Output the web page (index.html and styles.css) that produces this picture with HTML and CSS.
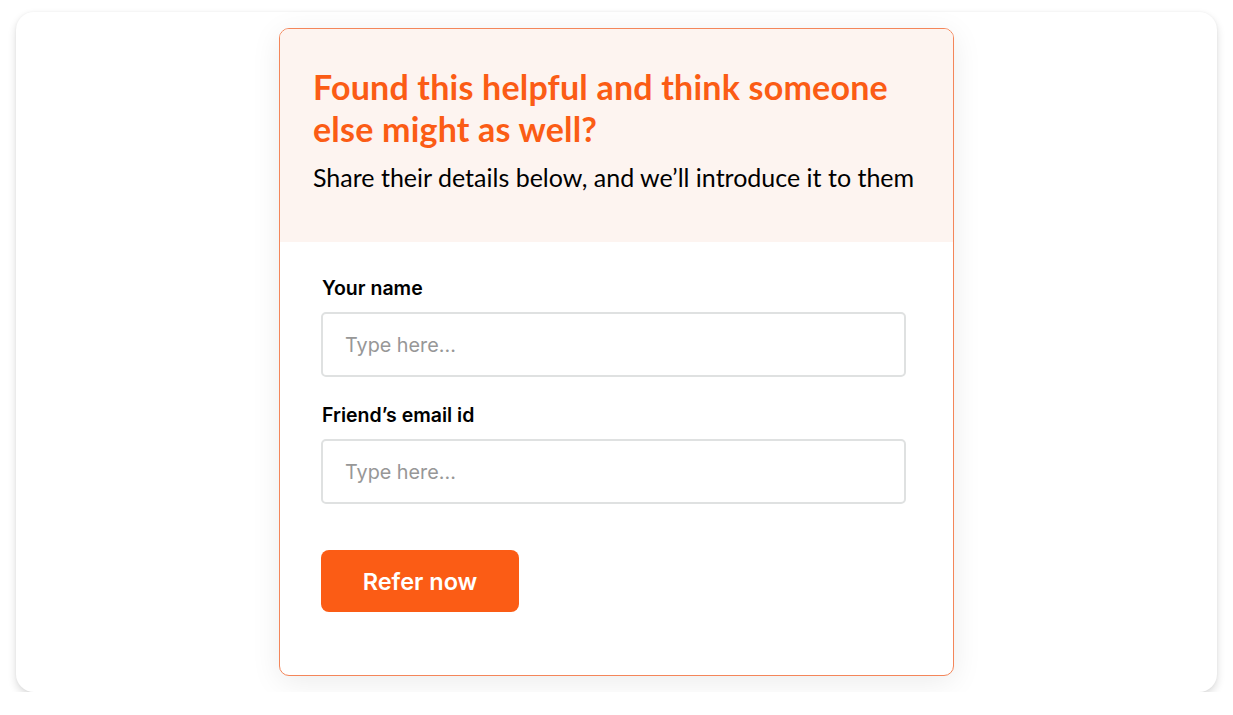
FILE: index.html
```html
<!DOCTYPE html>
<html lang="en">
<head>
<meta charset="utf-8">
<title>Refer a friend</title>
<link rel="stylesheet" href="styles.css">
</head>
<body>
<div class="page">
  <div class="frame">
    <div class="card">
      <div class="card-head">
        <h1 class="title">Found this helpful and think someone else might as well?</h1>
        <p class="subtitle">Share their details below, and we’ll introduce it to them</p>
      </div>
      <form class="card-body">
        <label class="field">
          <span class="label">Your name</span>
          <input class="input" type="text" placeholder="Type here...">
        </label>
        <label class="field">
          <span class="label">Friend’s email id</span>
          <input class="input" type="email" placeholder="Type here...">
        </label>
        <button class="btn" type="button">Refer now</button>
      </form>
    </div>
  </div>
</div>
</body>
</html>
```

FILE: styles.css
```css
* { box-sizing: border-box; }
html, body { margin: 0; padding: 0; background: #ffffff; }
body { font-family: "Inter", "Noto Sans", sans-serif; }

.page {
  padding: 12px 16px 0 16px;
}

.frame {
  height: 680px;
  background: #ffffff;
  border-radius: 18px;
  box-shadow: 0 4px 9px rgba(0, 0, 0, 0.14), 0 0 3px rgba(0, 0, 0, 0.05);
  display: flex;
  justify-content: center;
  padding-top: 16px;
}

.card {
  width: 675px;
  height: 648px;
  border: 1px solid #f4865a;
  border-radius: 10px;
  background: #ffffff;
  overflow: hidden;
  box-shadow: 0 6px 30px rgba(0, 0, 0, 0.08);
}

.card-head {
  background: #fdf4f0;
  height: 213px;
  padding: 37px 20px 0 33px;
}

.title {
  margin: 0;
  font-family: "Lato", "Open Sans", sans-serif;
  font-weight: 700;
  font-size: 34px;
  line-height: 42px;
  letter-spacing: 0.2px;
  color: #fb5c15;
  max-width: 600px;
}

.subtitle {
  margin: 11px 0 0 0;
  font-family: "Lato", "Open Sans", sans-serif;
  font-weight: 400;
  font-size: 25px;
  line-height: 32px;
  color: #000000;
}

.card-body {
  padding: 35px 47px 0 41px;
  display: flex;
  flex-direction: column;
}

.field {
  display: flex;
  flex-direction: column;
  gap: 13px;
  margin-bottom: 27px;
}

.label {
  font-size: 19.5px;
  line-height: 22px;
  font-weight: 600;
  color: #000000;
  padding-left: 1px;
}

.input {
  width: 585px;
  height: 65px;
  border: 2px solid #dfe1e1;
  border-radius: 5px;
  padding: 0 22px;
  font-family: "Inter", sans-serif;
  font-size: 19.8px;
  color: #222;
  background: #fff;
  outline: none;
}
.input::placeholder { color: #979797; }

.btn {
  margin-top: 19px;
  width: 198px;
  height: 62px;
  border: none;
  border-radius: 8px;
  background: #fb5c15;
  color: #ffffff;
  font-family: "Inter", sans-serif;
  font-weight: 600;
  font-size: 23.5px;
  cursor: pointer;
}
```
